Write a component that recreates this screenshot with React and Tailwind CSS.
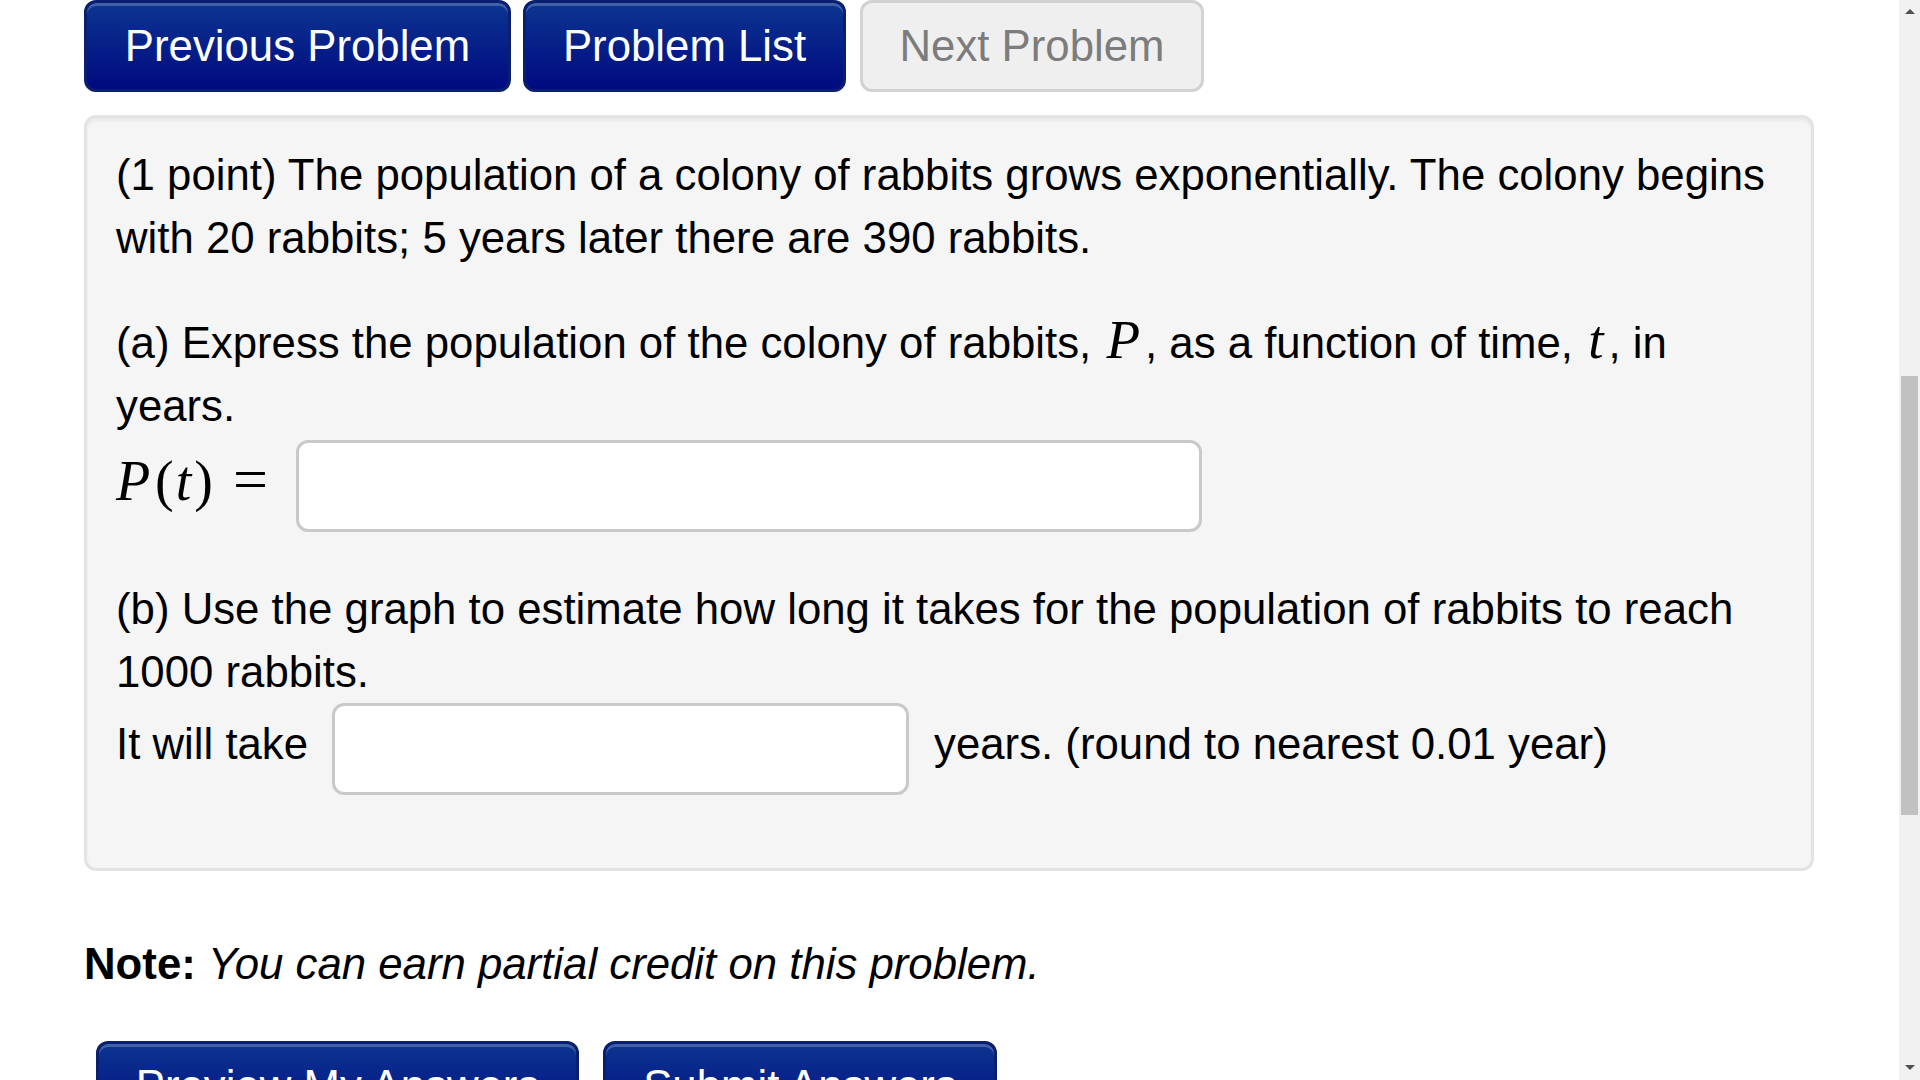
import React from 'react';

const NavButton = ({ children, disabled, className = '' }) => (
  <button
    type="button"
    className={
      'flex h-[92px] shrink-0 items-center justify-center whitespace-nowrap rounded-[12px] border-[3px] text-[43.75px] leading-[62.5px] ' +
      (disabled
        ? 'border-[#d2d2d2] bg-[#efefef] text-[#7c7c7c] '
        : 'border-[#0a1f6e] bg-[linear-gradient(to_bottom,#0c3590,#000a80)] text-white shadow-[inset_0_3px_0_rgba(255,255,255,0.22)] ') +
      className
    }
  >
    {children}
  </button>
);

const MathVar = ({ children }) => (
  <span className="ml-[3px] mr-[5px] font-['Liberation_Serif',serif] text-[55px] italic leading-none">
    {children}
  </span>
);

const AnswerBox = ({ className = '' }) => (
  <div className={'h-[92px] shrink-0 rounded-[12px] border-[3px] border-[#c9c9c9] bg-white ' + className} />
);

const Scrollbar = () => (
  <div className="flex h-[1080px] w-[21px] shrink-0 flex-col bg-[#f1f1f1]">
    <div className="flex h-[21px] items-start justify-center pt-[9px]">
      <svg width="10" height="5" viewBox="0 0 10 5">
        <polygon points="0,5 10,5 5,0" fill="#505050" />
      </svg>
    </div>
    <div className="flex-1 pt-[355px]">
      <div className="mx-auto h-[439px] w-[17px] bg-[#c1c1c1]" />
    </div>
    <div className="flex h-[21px] items-start justify-center pt-[6px]">
      <svg width="10" height="5" viewBox="0 0 10 5">
        <polygon points="0,0 10,0 5,5" fill="#505050" />
      </svg>
    </div>
  </div>
);

export default function App() {
  return (
    <div className="flex h-[1080px] w-full overflow-hidden bg-white font-['Liberation_Sans',Arial,sans-serif] text-black">
      <div className="min-w-0 flex-1 pl-[84px] pr-[85px]">
        {/* problem navigation */}
        <div className="flex">
          <NavButton className="w-[427px]">Previous Problem</NavButton>
          <NavButton className="ml-[12px] w-[323px]">Problem List</NavButton>
          <NavButton disabled className="ml-[14px] w-[344px]">
            Next Problem
          </NavButton>
        </div>

        {/* problem body */}
        <div className="mt-[23px] rounded-[12px] border-[3px] border-[#e3e3e3] bg-[#f5f5f5] px-[29px] pb-[73px] pt-[26px] text-[43.75px] leading-[62.5px] shadow-[inset_0_3px_3px_rgba(0,0,0,0.05)]">
          <p>
            (1 point) The population of a colony of rabbits grows exponentially. The colony begins
            <br />
            with 20 rabbits; 5 years later there are 390 rabbits.
          </p>

          <p className="mt-[43px]">
            (a) Express the population of the colony of rabbits, <MathVar>P</MathVar>, as a
            function of time, <MathVar>t</MathVar>, in
            <br />
            years.
          </p>
          <div className="mt-[3px] flex items-start">
            <div className="mt-[8px] flex items-baseline whitespace-nowrap font-['Liberation_Serif',serif] text-[56px] leading-[62px]">
              <i className="w-[36px]">P</i>
              <span className="ml-[3px]">(</span>
              <i className="ml-[2px]">t</i>
              <span className="ml-[3px]">)</span>
              <span className="ml-[20px] text-[62px]">=</span>
            </div>
            <AnswerBox className="ml-[28px] w-[906px]" />
          </div>

          <p className="mt-[46px]">
            (b) Use the graph to estimate how long it takes for the population of rabbits to reach
            <br />
            1000 rabbits.
          </p>
          <div className="flex items-start">
            <span className="mt-[10px] whitespace-nowrap">It will take</span>
            <AnswerBox className="ml-[24px] w-[577px]" />
            <span className="ml-[25px] mt-[10px] whitespace-nowrap">
              years. (round to nearest 0.01 year)
            </span>
          </div>
        </div>

        <p className="mt-[62px] text-[43.75px] leading-[62.5px]">
          <b>Note:</b> <i>You can earn partial credit on this problem.</i>
        </p>

        <div className="ml-[12px] mt-[45px] flex">
          <NavButton className="w-[483px]">Preview My Answers</NavButton>
          <NavButton className="ml-[24px] w-[394px]">Submit Answers</NavButton>
        </div>
      </div>
      <Scrollbar />
    </div>
  );
}
